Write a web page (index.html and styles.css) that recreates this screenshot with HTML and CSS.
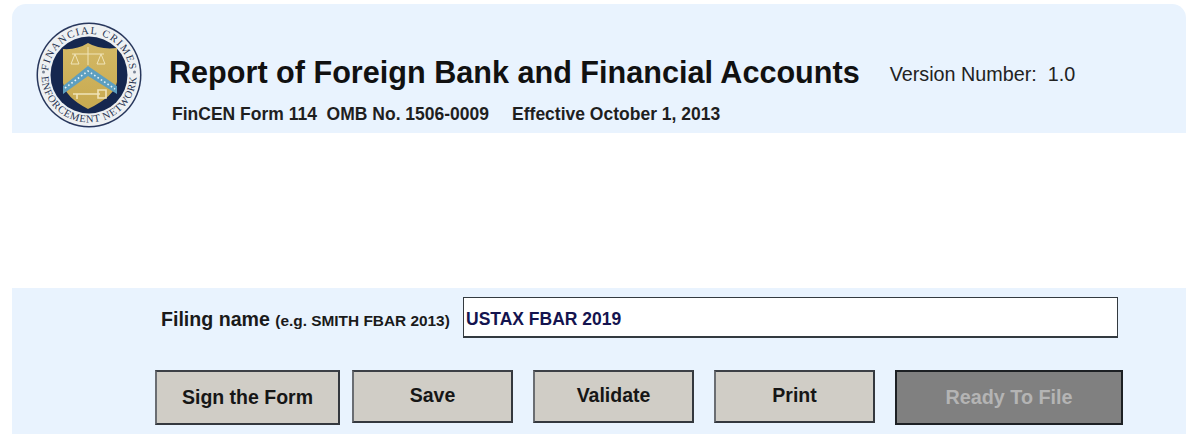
FILE: index.html
```html
<!DOCTYPE html>
<html lang="en">
<head>
<meta charset="utf-8">
<title>Report of Foreign Bank and Financial Accounts</title>
<link rel="stylesheet" href="styles.css">
</head>
<body>
<main class="page">
  <header class="header">
    <svg class="seal" viewBox="0 0 106 106" aria-label="Financial Crimes Enforcement Network seal">
      <defs>
        <path id="arcTop" d="M12 53 A41 41 0 0 1 94 53"/>
        <path id="arcBottom" d="M5.500 53 A47.500 47.500 0 0 0 100.500 53"/>
        <linearGradient id="gold" x1="0" y1="0" x2="0" y2="1">
          <stop offset="0" stop-color="#d3b865"/>
          <stop offset="1" stop-color="#c8aa50"/>
        </linearGradient>
      </defs>
      <circle cx="53" cy="53" r="52.500" fill="#27365c"/>
      <circle cx="53" cy="53" r="51" fill="#eef1f3"/>
      <circle cx="53" cy="53" r="38.500" fill="#15274f"/>
      <text class="seal-text seal-top"><textPath href="#arcTop" startOffset="50%" text-anchor="middle">FINANCIAL CRIMES</textPath></text>
      <text class="seal-text"><textPath href="#arcBottom" startOffset="50%" text-anchor="middle">ENFORCEMENT NETWORK</textPath></text>
      <circle cx="7.500" cy="50" r="1.500" fill="#7c8798"/>
      <circle cx="98.500" cy="50" r="1.500" fill="#7c8798"/>
      <path d="M27 27 Q41 28 52 21 Q64 28 81 26 L81 60 Q79 74 52 87 Q29 75 27 61 Z" fill="url(#gold)"/>
      <path d="M27 64 L52 44 L81 64 L81 72 L52 54 L27 72 Z" fill="#5d9fc0"/>
      <path d="M29 66 L52 49 L79 67" fill="none" stroke="#e8f2f6" stroke-width="1.600" stroke-dasharray="1.600 2.400"/>
      <path d="M52 25 V43 M36 32 H68 M39 32 L35 42 H43 Z M65 32 L61 42 H69 Z" fill="none" stroke="#f0e4b8" stroke-width="1"/>
      <path d="M37 72 H64 M62 68 H70 V76 H62 Z M41 72 V77" fill="none" stroke="#f0e4b8" stroke-width="1.600"/>
    </svg>
    <div class="titles">
      <div class="title-row">
        <h1 class="title">Report of Foreign Bank and Financial Accounts</h1>
        <span class="version">Version Number:&nbsp; 1.0</span>
      </div>
      <p class="subtitle"><span class="form-no">FinCEN Form 114&nbsp; OMB No. 1506-0009</span><span>Effective October 1, 2013</span></p>
    </div>
  </header>

  <div class="spacer"></div>

  <section class="panel">
    <div class="filing-row">
      <label class="filing-label" for="filing">Filing name <small class="hint">(e.g. SMITH FBAR 2013)</small></label>
      <input class="filing-input" id="filing" type="text" value="USTAX FBAR 2019">
    </div>
    <div class="buttons">
      <button class="btn btn-sign" type="button">Sign the Form</button>
      <button class="btn btn-save" type="button">Save</button>
      <button class="btn btn-mid" type="button">Validate</button>
      <button class="btn btn-mid" type="button">Print</button>
      <button class="btn btn-ready" type="button">Ready To File</button>
    </div>
  </section>
</main>
</body>
</html>
```

FILE: styles.css
```css
* {
  box-sizing: border-box;
}

html,
body {
  margin: 0;
  background: #fff;
}

body {
  font-family: "Liberation Sans", Arial, sans-serif;
  color: #1a1a1a;
}

.page {
  width: 1200px;
  height: 442px;
  padding: 4px 14px 0 12px;
}

.header {
  height: 129px;
  display: flex;
  background: #e9f3fe;
  border-radius: 14px 14px 0 0;
  padding: 18px 0 0 24px;
}

.seal {
  width: 106px;
  height: 106px;
  flex: none;
}

.seal-text {
  font-family: "Liberation Serif", serif;
  font-size: 10.500px;
  letter-spacing: 0.7px;
  fill: #26324f;
}

.seal-top {
  letter-spacing: 1.400px;
}

.titles {
  margin-left: 27px;
  padding-top: 30px;
}

.title-row {
  display: flex;
  align-items: flex-start;
  gap: 30px;
}

.title {
  margin: 0;
  font-size: 30.600px;
  line-height: 40px;
  font-weight: 700;
  color: #111;
}

.version {
  margin-top: 11px;
  font-size: 19.750px;
  line-height: 22px;
  color: #222;
}

.subtitle {
  margin: 12px 0 0 3px;
  font-size: 17.500px;
  line-height: 20px;
  font-weight: 700;
  color: #1f1f1f;
}

.form-no {
  margin-right: 23px;
}

.spacer {
  height: 155px;
}

.panel {
  height: 146px;
  background: #e9f3fe;
  padding: 9px 0 0 143px;
}

.filing-row {
  display: flex;
  align-items: center;
  height: 41px;
}

.filing-label {
  width: 308px;
  padding: 3px 0 0 6px;
  font-size: 19.600px;
  font-weight: 700;
  color: #1a1a1a;
  white-space: nowrap;
}

.hint {
  font-size: 15.400px;
}

.filing-input {
  width: 655px;
  height: 41px;
  padding: 5px 2px 0;
  border: 1px solid #333a40;
  border-bottom-width: 2px;
  background: #fff;
  font: 700 17.500px "Liberation Sans", Arial, sans-serif;
  color: #14144f;
}

.buttons {
  display: flex;
  align-items: flex-start;
  margin-top: 32px;
}

.btn {
  height: 53px;
  padding: 0 0 2px;
  border: 2px solid;
  border-color: #3c4046 #34383e #34383e #6a6d72;
  background: #d0cdc6;
  font: 700 19.500px "Liberation Sans", Arial, sans-serif;
  color: #161616;
}

.btn-sign {
  width: 185px;
  height: 55px;
  padding: 0;
  margin-right: 12px;
}

.btn-save {
  width: 161px;
  margin-right: 20px;
}

.btn-mid {
  width: 161px;
  margin-right: 20px;
}

.btn-ready {
  width: 228px;
  height: 55px;
  padding: 0;
  border-color: #1d2024;
  background: #808080;
  font-size: 19.800px;
  color: #b4b4b4;
}
```
